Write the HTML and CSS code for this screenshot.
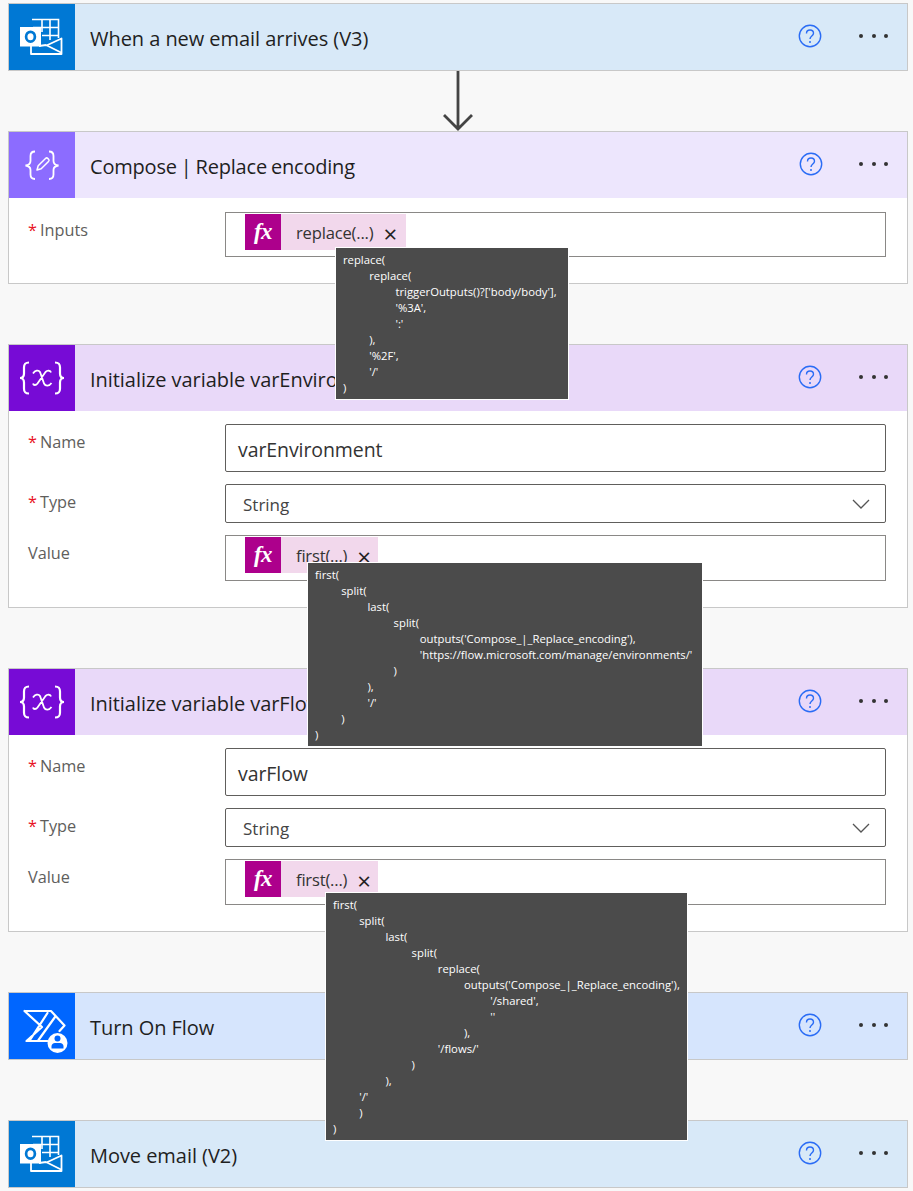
FILE: index.html
```html
<!DOCTYPE html>
<html lang="en">
<head>
<meta charset="utf-8">
<title>Flow</title>
<link rel="stylesheet" href="styles.css">
</head>
<body>
<svg class="defs" width="0" height="0" aria-hidden="true">
  <defs>
    <symbol id="outlook" viewBox="0 0 66 66">
      <path d="M23 15.500h26.500V34M33 15.500V28M41 15.500V36M24 23.500h25M33 31.500h16" fill="none" stroke="#fff" stroke-width="1.600"/>
      <path d="M22 40v10h30.500V34.500L37.500 41.500" fill="none" stroke="#fff" stroke-width="1.800" stroke-linejoin="round"/>
      <path d="M37 41l15 7.500M30 42l7-1" fill="none" stroke="#fff" stroke-width="1.800"/>
      <rect x="11" y="23" width="21" height="19.500" fill="#fff"/>
      <ellipse cx="21.500" cy="32.700" rx="4.400" ry="4.900" fill="none" stroke="#0078d4" stroke-width="2.700"/>
    </symbol>
    <symbol id="varicon" viewBox="0 0 66 66">
      <path d="M20 17.500c-4 0-5 1.500-5 5v6c0 3-1 4.500-4 4.500 3 0 4 1.500 4 4.500v6c0 3.500 1 5 5 5M46 17.500c4 0 5 1.500 5 5v6c0 3 1 4.500 4 4.500-3 0-4 1.500-4 4.500v6c0 3.500-1 5-5 5" fill="none" stroke="#fff" stroke-width="2.200"/>
      <path d="M24 28.500c2-3 5.500-4 7-1.500L35 38.500c1.500 3 5 3 7.500-.5M42 27.500c-.5-2-3.500-2.500-5.500-.5L28.500 38.500c-1.500 2-4 2-4.500 0" fill="none" stroke="#fff" stroke-width="1.800"/>
    </symbol>
    <symbol id="helpicon" viewBox="0 0 24 24">
      <circle cx="12" cy="12" r="10.700" fill="none" stroke="#2a6cf5" stroke-width="1.400"/>
      <path d="M8.500 9.500c0-2.200 1.500-3.500 3.500-3.500s3.500 1.300 3.500 3.200c0 2.800-3.500 2.800-3.500 5.800" fill="none" stroke="#2a6cf5" stroke-width="1.400"/>
      <circle cx="12" cy="18" r="1" fill="#2a6cf5"/>
    </symbol>
  </defs>
</svg>
<main class="flow">
  <section class="card">
    <header class="head">
      <div class="tile tile-outlook"><svg class="ico"><use href="#outlook"/></svg></div>
      <h2 class="title">When a new email arrives (V3)</h2>
      <svg class="help"><use href="#helpicon"/></svg>
      <div class="more"><i></i><i></i><i></i></div>
    </header>
  </section>
  <div class="link link-arrow">
    <svg class="arrow" viewBox="0 0 32 60"><path d="M16 0v58M2 44l14 14 14-14"/></svg>
  </div>
  <section class="card">
    <header class="head compose">
      <div class="tile tile-compose">
        <svg class="ico" viewBox="0 0 66 66"><path d="M26 19.500c-3.500 0-4.500 1.500-4.500 4.500v5c0 3-1.500 4-5 4.500 3.500.5 5 1.500 5 4.500v4.500c0 3 1 4.500 4.500 4.500M40 19.500c3.500 0 4.500 1.500 4.500 4.500v5c0 3 1.500 4 5 4.500-3.500.5-5 1.500-5 4.500v4.500c0 3-1 4.500-4.500 4.500" fill="none" stroke="#fff" stroke-width="1.800"/><path d="M28 38l1.200-4.200 7.300-7.300c.8-.8 1.500-.8 2.200-.1l.9.900c.7.7.7 1.400-.1 2.200l-7.300 7.300z" fill="none" stroke="#fff" stroke-width="1.500" stroke-linejoin="round"/></svg>
      </div>
      <h2 class="title title-compose">Compose | Replace encoding</h2>
      <svg class="help help-compose"><use href="#helpicon"/></svg>
      <div class="more"><i></i><i></i><i></i></div>
    </header>
    <div class="body body-one">
      <div class="row"><div class="label"><b>*</b>Inputs</div>
        <div class="box chipbox"><span class="chip chip-replace"><span class="fx">fx</span><span class="chiptext">replace(...)</span><span class="x">×</span></span></div>
      </div>
    </div>
  </section>
  <section class="card gap">
    <header class="head variable">
      <div class="tile tile-var"><svg class="ico"><use href="#varicon"/></svg></div>
      <h2 class="title">Initialize variable varEnvironment</h2>
      <svg class="help"><use href="#helpicon"/></svg>
      <div class="more"><i></i><i></i><i></i></div>
    </header>
    <div class="body">
      <div class="row row-name"><div class="label"><b>*</b>Name</div><div class="box input">varEnvironment</div></div>
      <div class="row row-type"><div class="label"><b>*</b>Type</div><div class="box select"><span>String</span><svg class="chev" viewBox="0 0 18 10"><path d="M1 1l8 8 8-8"/></svg></div></div>
      <div class="row row-value"><div class="label">Value</div><div class="box chipbox"><span class="chip chip-first"><span class="fx">fx</span><span class="chiptext">first(...)</span><span class="x">×</span></span></div></div>
    </div>
  </section>
  <section class="card gap">
    <header class="head variable">
      <div class="tile tile-var"><svg class="ico"><use href="#varicon"/></svg></div>
      <h2 class="title">Initialize variable varFlow</h2>
      <svg class="help"><use href="#helpicon"/></svg>
      <div class="more"><i></i><i></i><i></i></div>
    </header>
    <div class="body">
      <div class="row row-name"><div class="label"><b>*</b>Name</div><div class="box input">varFlow</div></div>
      <div class="row row-type"><div class="label"><b>*</b>Type</div><div class="box select"><span>String</span><svg class="chev" viewBox="0 0 18 10"><path d="M1 1l8 8 8-8"/></svg></div></div>
      <div class="row row-value"><div class="label">Value</div><div class="box chipbox"><span class="chip chip-first"><span class="fx">fx</span><span class="chiptext">first(...)</span><span class="x">×</span></span></div></div>
    </div>
  </section>
  <section class="card gap">
    <header class="head turnon">
      <div class="tile tile-flow"><svg class="ico" viewBox="0 0 66 66"><path d="M15.500 18h26.500l13.500 14.500-5 5.500M15.500 18l17.500 16-15.500 14h21M38.500 20L21 47M46 24L29.500 47" fill="none" stroke="#fff" stroke-width="2.200" stroke-linejoin="round" stroke-linecap="round"/><circle cx="48.500" cy="50" r="10" fill="#fff"/><circle cx="48.500" cy="45.500" r="3" fill="#0066ff"/><path d="M42.500 55.500v-2c0-2 1.500-3.500 3.500-3.500h5c2 0 3.500 1.500 3.500 3.500v2z" fill="#0066ff"/></svg></div>
      <h2 class="title">Turn On Flow</h2>
      <svg class="help"><use href="#helpicon"/></svg>
      <div class="more"><i></i><i></i><i></i></div>
    </header>
  </section>
  <section class="card gap">
    <header class="head">
      <div class="tile tile-outlook"><svg class="ico"><use href="#outlook"/></svg></div>
      <h2 class="title">Move email (V2)</h2>
      <svg class="help"><use href="#helpicon"/></svg>
      <div class="more"><i></i><i></i><i></i></div>
    </header>
  </section>
</main>
<pre class="tip tip-a">replace(
	replace(
		triggerOutputs()?['body/body'],
		'%3A',
		':'
	),
	'%2F',
	'/'
)</pre>
<pre class="tip tip-b">first(
	split(
		last(
			split(
				outputs('Compose_|_Replace_encoding'),
				'https://flow.microsoft.com/manage/environments/'
			)
		),
		'/'
	)
)</pre>
<pre class="tip tip-c">first(
	split(
		last(
			split(
				replace(
					outputs('Compose_|_Replace_encoding'),
						'/shared',
						''
					),
				'/flows/'
			)
		),
	'/'
	)
)</pre>
</body>
</html>
```
FILE: styles.css
```css
* { box-sizing: border-box; }
html, body { margin: 0; padding: 0; }
body {
  width: 913px;
  height: 1191px;
  overflow: hidden;
  background: #f8f8f8;
  font-family: "Open Sans", "Noto Sans", sans-serif;
  position: relative;
}
.defs { position: absolute; }
.flow { display: flex; flex-direction: column; padding: 3px 5px 0 8px; }
.card { border: 1px solid #c8c8c8; background: #fff; }
.gap { margin-top: 60px; }
.head { display: flex; align-items: center; height: 66px; background: #d8e9f8; }
.head.compose { background: #ede6fd; }
.head.variable { background: #e9d9f9; }
.head.turnon { background: #d6e5fd; }
.tile { width: 66px; height: 66px; flex: none; }
.tile-outlook { background: #0078d4; }
.tile-compose { background: #8c6cff; }
.tile-var { background: #770bd6; }
.tile-flow { background: #0066ff; }
.ico { display: block; width: 66px; height: 66px; }
.title {
  margin: 2px 0 0 15px;
  flex: 1;
  font-size: 20px;
  font-weight: 400;
  color: #1f1f1f;
  white-space: nowrap;
  letter-spacing: -.05px;
}
.title-compose { letter-spacing: -.2px; word-spacing: -1px; }
.help { width: 24px; height: 24px; flex: none; margin: -3px 37px 0 0; }
.help-compose { margin-right: 36px; }
.more { display: flex; gap: 8.500px; width: 40px; margin: -3px 8px 0 0; flex: none; }
.more i { width: 4px; height: 4px; border-radius: 50%; background: #333; }
.link { display: flex; justify-content: center; height: 60px; }
.link-arrow { padding-right: 1px; }
.arrow { width: 32px; height: 60px; }
.arrow path { fill: none; stroke: #444; stroke-width: 2.800; }
.body { padding: 13px 21px 26px 19px; display: flex; flex-direction: column; gap: 12px; }
.body-one { padding-top: 14px; }
.row { display: flex; align-items: flex-start; }
.label { width: 197px; padding-top: 7px; font-size: 16.300px; color: #605e5c; flex: none; }
.label b { color: #e81123; font-weight: 400; margin-right: 3px; }
.box { flex: 1; border: 1px solid #8a8886; background: #fff; }
.input { height: 48px; border-color: #605e5c; border-radius: 2px; padding: 2px 0 0 12px; display: flex; align-items: center; font-size: 19.500px; color: #333; letter-spacing: -.08px; }
.select { height: 39px; border-color: #605e5c; border-radius: 2px; display: flex; align-items: center; justify-content: space-between; padding: 2px 15px 0 17px; font-size: 17px; color: #444; }
.chev { width: 18px; height: 10px; margin-top: -2px; }
.chev path { fill: none; stroke: #555; stroke-width: 1.300; }
.chipbox { height: 46px; padding: 1px 0 0 19px; }
.body-one .chipbox { height: 45px; }
.chip { display: inline-flex; align-items: center; height: 36px; background: #f2d8ec; color: #333; font-size: 16.600px; }
.chip-replace { width: 161px; }
.chip-first { width: 133px; }
.fx { width: 36px; height: 36px; flex: none; background: #ad008c; color: #fff; display: flex; align-items: center; justify-content: center; font: italic 700 23px "Liberation Serif", serif; letter-spacing: -.5px; }
.chiptext { margin-left: 15px; white-space: nowrap; letter-spacing: -.2px; }
.x { margin-left: 10px; padding-top: 3px; font-size: 24px; line-height: 1; color: #222; }
.tip {
  position: absolute;
  margin: 0;
  padding: 4px 7px 0 7px;
  background: #4b4b4b;
  border: 1px solid #fff;
  color: #fff;
  font: 500 11.300px/16px "Open Sans", sans-serif;
  tab-size: 26.200px;
}
.tip-a { left: 335px; top: 247px; width: 234px; height: 153px; }
.tip-b { left: 307px; top: 562px; width: 396px; height: 185px; }
.tip-c { left: 325px; top: 892px; width: 363px; height: 249px; }
```
